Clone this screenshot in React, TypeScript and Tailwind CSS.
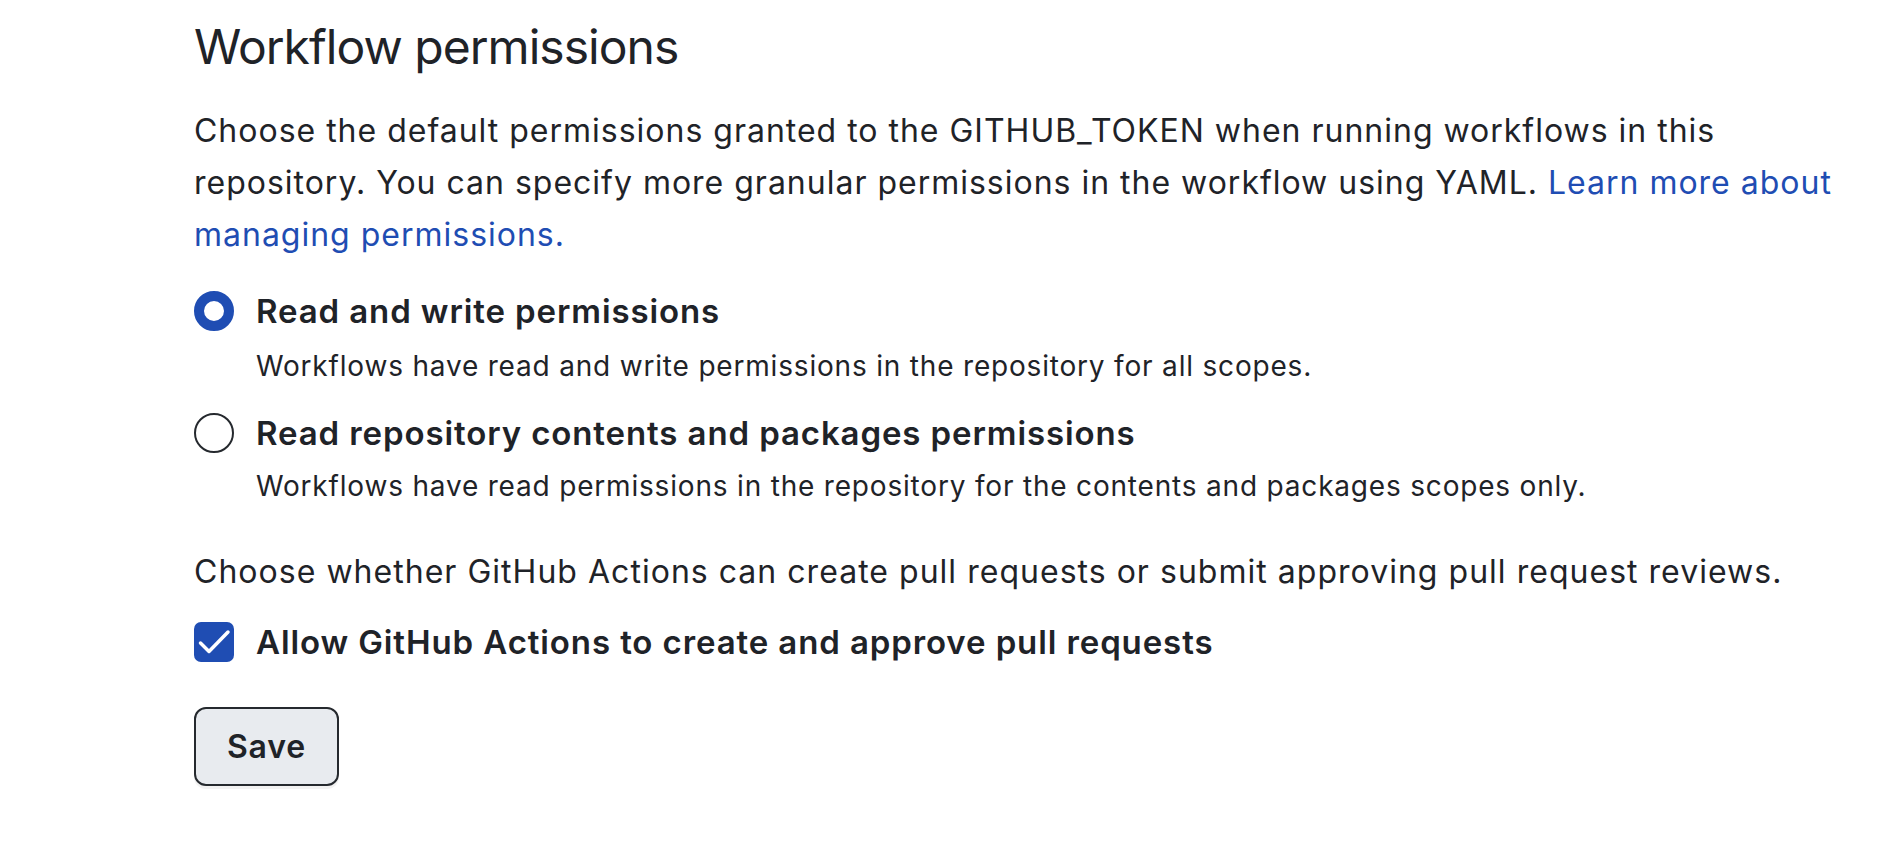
import React from "react";

export default function App() {
  return (
    <div
      className="min-h-screen bg-white pl-[194px] pt-[17px] text-[#1f2328]"
      style={{ fontFamily: "Inter, 'Noto Sans', sans-serif" }}
    >
      <h2 className="text-[48px] leading-[60px] font-normal tracking-[-0.02em]">Workflow permissions</h2>
      <p className="mt-[28px] w-[1656px] text-[32px] leading-[52px] tracking-[0.031em]">
        <span>Choose the default permissions granted to the GITHUB_TOKEN when running workflows in this</span>{" "}
        <span>repository. You can specify more granular permissions in the workflow using YAML.</span>{" "}
        <a className="text-[#1f4db3]" href="#">
          Learn more about
        </a>{" "}
        <a className="text-[#1f4db3]" href="#">
          managing permissions.
        </a>
      </p>

      <div className="mt-[30px] flex flex-col">
        <label className="flex flex-col">
          <div className="flex items-center gap-[22px]">
            <span className="box-border h-[40px] w-[40px] shrink-0 rounded-full border-[10px] border-[#1f4db3] bg-white" />
            <span className="text-[33px] leading-[40px] font-semibold tracking-[0.027em]">
              Read and write permissions
            </span>
          </div>
          <span className="mt-[15px] pl-[62px] text-[28px] leading-[40px] tracking-[0.029em]">
            Workflows have read and write permissions in the repository for all scopes.
          </span>
        </label>

        <label className="mt-[27px] flex flex-col">
          <div className="flex items-center gap-[22px]">
            <span className="box-border h-[40px] w-[40px] shrink-0 rounded-full border-2 border-[#25292e] bg-white" />
            <span className="text-[33px] leading-[40px] font-semibold tracking-[0.027em]">
              Read repository contents and packages permissions
            </span>
          </div>
          <span className="mt-[13px] pl-[62px] text-[28px] leading-[40px] tracking-[0.029em]">
            Workflows have read permissions in the repository for the contents and packages scopes only.
          </span>
        </label>
      </div>

      <p className="mt-[40px] text-[32px] leading-[52px] tracking-[0.032em]">
        Choose whether GitHub Actions can create pull requests or submit approving pull request reviews.
      </p>

      <label className="mt-[24px] flex items-center gap-[22px]">
        <span className="flex h-[40px] w-[40px] shrink-0 items-center justify-center rounded-[7px] bg-[#1f4db3]">
          <svg viewBox="0 0 40 40" className="h-[40px] w-[40px]" fill="none">
            <polyline
              points="6.5,21 15,29.5 34,10"
              stroke="white"
              strokeWidth="3.5"
              strokeLinecap="round"
              strokeLinejoin="round"
            />
          </svg>
        </span>
        <span className="text-[33px] leading-[40px] font-semibold tracking-[0.027em]">
          Allow GitHub Actions to create and approve pull requests
        </span>
      </label>

      <button className="mt-[45px] box-border flex h-[79px] items-center rounded-[12px] border-2 border-[#25292e] bg-[#e8ebef] px-[31px] text-[32px] font-semibold tracking-[0.025em] text-[#1f2328] shadow-[0_3px_0_rgba(31,35,40,0.06)]">
        Save
      </button>
    </div>
  );
}
